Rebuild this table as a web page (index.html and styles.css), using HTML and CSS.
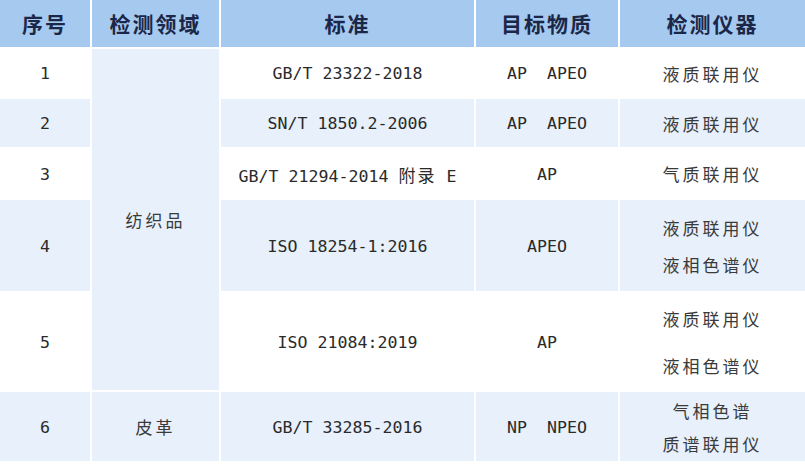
FILE: index.html
```html
<!DOCTYPE html>
<html lang="zh">
<head>
<meta charset="utf-8">
<title>检测标准</title>
<link rel="stylesheet" href="styles.css">
</head>
<body>
<div class="table">
  <div class="cell head">序号</div>
  <div class="cell head">检测领域</div>
  <div class="cell head">标准</div>
  <div class="cell head">目标物质</div>
  <div class="cell head">检测仪器</div>

  <div class="cell field field-textile">纺织品</div>

  <div class="cell r1 num">1</div>
  <div class="cell r1 lat">GB/T 23322-2018</div>
  <div class="cell r1 lat pre">AP  APEO</div>
  <div class="cell r1 zh">液质联用仪</div>

  <div class="cell r2 alt num">2</div>
  <div class="cell r2 alt lat">SN/T 1850.2-2006</div>
  <div class="cell r2 alt lat pre">AP  APEO</div>
  <div class="cell r2 alt zh">液质联用仪</div>

  <div class="cell r3 num">3</div>
  <div class="cell r3 lat"><span class="line">GB/T 21294-2014 <span class="zh-in">附录</span> E</span></div>
  <div class="cell r3 lat">AP</div>
  <div class="cell r3 zh">气质联用仪</div>

  <div class="cell r4 alt num">4</div>
  <div class="cell r4 alt lat">ISO 18254-1:2016</div>
  <div class="cell r4 alt lat">APEO</div>
  <div class="cell r4 alt zh two">液质联用仪<br>液相色谱仪</div>

  <div class="cell r5 num">5</div>
  <div class="cell r5 lat">ISO 21084:2019</div>
  <div class="cell r5 lat">AP</div>
  <div class="cell r5 zh wide">液质联用仪<br>液相色谱仪</div>

  <div class="cell r6 alt num">6</div>
  <div class="cell r6 alt field">皮革</div>
  <div class="cell r6 alt lat">GB/T 33285-2016</div>
  <div class="cell r6 alt lat pre">NP  NPEO</div>
  <div class="cell r6 alt zh tight">气相色谱<br>质谱联用仪</div>
</div>
</body>
</html>
```

FILE: styles.css
```css
html, body {
  margin: 0;
  padding: 0;
  background: #ffffff;
}

.table {
  display: grid;
  grid-template-columns: 90px 127px 253px 142px 185px;
  grid-template-rows: 47px 48px 48px 49px 91px 97px 69px;
  gap: 2px;
  width: 805px;
  background: #ffffff;
}

.cell {
  display: flex;
  align-items: center;
  justify-content: center;
  text-align: center;
  color: #2e2e2e;
  background: #ffffff;
}

.head {
  background: #a6c9ef;
  color: #1b2748;
  font-family: "Noto Sans CJK SC", sans-serif;
  font-weight: 700;
  font-size: 21px;
  letter-spacing: 2px;
  padding-bottom: 2px;
}

.alt {
  background: #e7f0fb;
}

.field {
  background: #e7f0fb;
  font-family: "Noto Sans CJK SC", sans-serif;
  font-size: 17px;
  letter-spacing: 3px;
  color: #3a3a3a;
}

.field-textile {
  grid-column: 2;
  grid-row: 2 / 7;
}

.num, .lat {
  font-family: "DejaVu Sans Mono", "Liberation Mono", monospace;
  font-size: 16.6px;
  color: #2a2a2a;
  padding-top: 1px;
}

.pre {
  white-space: pre;
}

.line {
  white-space: pre;
}

.zh-in {
  font-family: "Noto Sans CJK SC", sans-serif;
  font-size: 17px;
  letter-spacing: 2px;
}

.zh {
  font-family: "Noto Sans CJK SC", sans-serif;
  font-size: 17px;
  letter-spacing: 3px;
  color: #3a3a3a;
  line-height: 37px;
}

.zh.wide {
  line-height: 47px;
}

.zh.tight {
  line-height: 33px;
}
```
